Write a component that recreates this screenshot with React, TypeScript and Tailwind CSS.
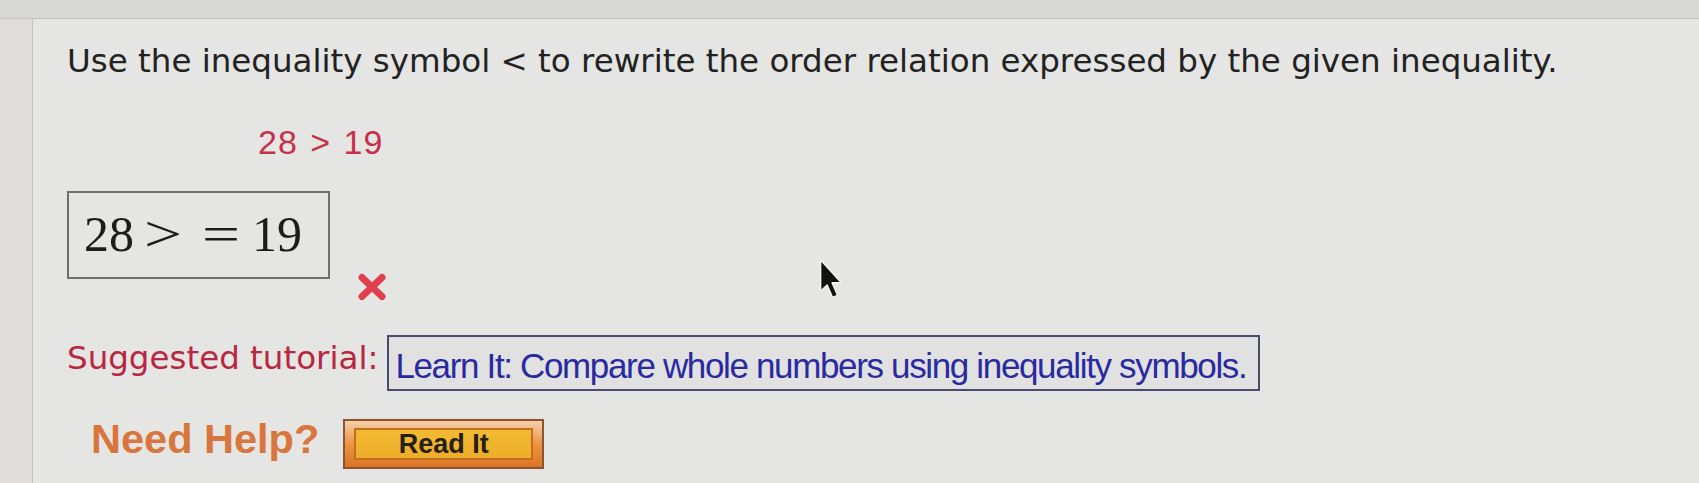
import React from "react";

const verdana = "font-['DejaVu_Sans',Verdana,sans-serif]";
const arial = "font-['Liberation_Sans',Arial,sans-serif]";

function WrongMark() {
  return (
    <svg width="30" height="28" viewBox="0 0 30 28" className="block">
      <path d="M5 4.5 L25 23.5 M25 4.5 L5 23.5" stroke="#e0404e" strokeWidth="7" strokeLinecap="round" fill="none" />
    </svg>
  );
}

function Cursor() {
  return (
    <svg width="25" height="42" viewBox="0 0 23 38" className="absolute left-[819px] top-[258px]">
      <path
        d="M1.5 1.5 L1.5 30 L7.5 24.5 L12.5 36 L17 34 L12 22.5 L20.5 22.5 Z"
        fill="#111"
        stroke="#f4f4f4"
        strokeWidth="1.3"
        strokeLinejoin="round"
      />
    </svg>
  );
}

export default function App() {
  return (
    <div className="relative w-[1699px] h-[483px] overflow-hidden bg-[#e4e4e2] flex flex-col">
      <div className="h-[19px] shrink-0 bg-[#d9d9d7] border-b border-[#c3c3c1]" />
      <div className="flex flex-1">
        <div className="w-[33px] shrink-0 bg-[#dedddb] border-r border-[#c4c4c2]" />
        <div className="flex-1 flex flex-col pl-[34px] bg-[#e5e5e3]">
          <p className={`${verdana} mt-[23px] text-[32.5px] leading-[38px] text-[#222] whitespace-nowrap`}>
            Use the inequality symbol &lt; to rewrite the order relation expressed by the given inequality.
          </p>

          <p className={`${arial} mt-[44px] ml-[191px] text-[34px] leading-[36px] tracking-[1px] [word-spacing:2px] text-[#c63049]`}>
            28 &gt; 19
          </p>

          <div className="mt-[31px] flex items-start">
            <div className="w-[263px] h-[88px] border-2 border-[#6e6e6e] pl-[15px] pt-[16px] font-['Liberation_Serif','Times_New_Roman',serif] text-[50px] leading-[50px] text-[#1c1c1c] whitespace-nowrap">
              28
              <span className="inline-block w-[34px] ml-[12px] text-center scale-x-[1.35]">&gt;</span>
              <span className="inline-block w-[34px] ml-[24px] text-center scale-x-[1.35]">=</span>
              <span className="ml-[14px]">19</span>
            </div>
            <div className="mt-[82px] ml-[27px]">
              <WrongMark />
            </div>
          </div>

          <div className="mt-[34px] flex items-start">
            <span className={`${verdana} mt-[4px] text-[32.5px] leading-[38px] text-[#b8263f] whitespace-nowrap`}>
              Suggested tutorial:
            </span>
            <div className="ml-[9px] w-[873px] h-[56px] border-2 border-[#4b4b6e] bg-[#e1e1e1] pl-[6px] pt-[9px]">
              <span className={`${arial} block text-[35px] leading-[40px] tracking-[-1.35px] text-[#2a2aa0] whitespace-nowrap`}>
                Learn It: Compare whole numbers using inequality symbols.
              </span>
            </div>
          </div>

          <div className="mt-[25px] flex items-start">
            <span className={`${arial} ml-[24px] mt-[0px] text-[41.5px] leading-[46px] font-bold text-[#d8763e] whitespace-nowrap`}>
              Need Help?
            </span>
            <button className="ml-[24px] mt-[3px] w-[201px] h-[50px] border-2 border-[#8a5530] bg-gradient-to-b from-[#f6cfa8] via-[#eb9440] to-[#dc7424] px-[9px] py-[7px]">
              <span className={`${arial} flex h-full items-center justify-center border-2 border-[#c2701e] bg-gradient-to-b from-[#f3bb33] to-[#edac29] text-[27px] font-bold text-[#262016]`}>
                Read It
              </span>
            </button>
          </div>
        </div>
      </div>
      <Cursor />
    </div>
  );
}
